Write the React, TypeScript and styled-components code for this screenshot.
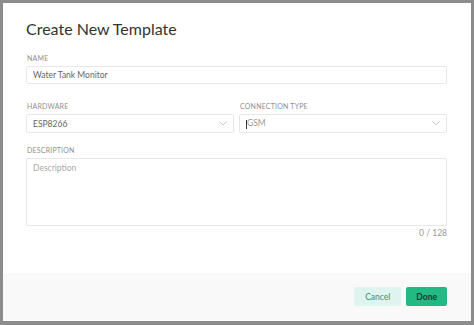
import React from "react";
import styled, { createGlobalStyle } from "styled-components";

const Global = createGlobalStyle`
  html, body { margin: 0; padding: 0; background: #8c8c8c; }
  body { font-family: Lato, "Open Sans", sans-serif; }
  #root { padding: 3px 3px 4px 3px; }
`;

const Modal = styled.div`
  width: 468px;
  height: 318px;
  background: #fff;
  display: flex;
  flex-direction: column;
  box-sizing: border-box;
`;

const Body = styled.div`
  flex: 1;
  padding: 15px 24px 0 23px;
  display: flex;
  flex-direction: column;
`;

const Title = styled.h1`
  margin: 0 0 14px 0;
  font-family: Lato, sans-serif;
  font-weight: 400;
  font-size: 16px;
  line-height: 22px;
  color: #333;
  letter-spacing: 0;
`;

const Row = styled.div`
  display: grid;
  grid-template-columns: 1fr 1fr;
  column-gap: 5px;
`;

const Field = styled.div<{ $mb?: number }>`
  display: flex;
  flex-direction: column;
  margin-bottom: ${(p) => p.$mb ?? 12}px;
`;

const Label = styled.div`
  font-size: 7px;
  line-height: 9px;
  color: #8f8f8f;
  letter-spacing: 0.2px;
  margin-bottom: 3px;
  padding-left: 1px;
`;

const Box = styled.div<{ $h?: number }>`
  height: ${(p) => p.$h ?? 19}px;
  border: 1px solid #e8e8e8;
  border-radius: 2px;
  box-sizing: border-box;
  display: flex;
  align-items: ${(p) => (p.$h && p.$h > 30 ? "flex-start" : "center")};
  padding: ${(p) => (p.$h && p.$h > 30 ? "4px 6px" : "0 6px")};
  font-size: 8.5px;
  color: #666;
`;

const Placeholder = styled.span`
  color: #aaa;
`;

const Value = styled.span<{ $muted?: boolean }>`
  flex: 1;
  color: ${(p) => (p.$muted ? "#999" : "#666")};
`;

const Caret = styled.span`
  display: inline-block;
  width: 1px;
  height: 9px;
  background: #333;
  vertical-align: middle;
`;

const Counter = styled.div`
  text-align: right;
  font-size: 8.5px;
  color: #999;
  margin-top: 2px;
`;

const Footer = styled.div`
  height: 47px;
  background: #f9f9f9;
  margin-bottom: 1px;
  display: flex;
  align-items: center;
  justify-content: flex-end;
  gap: 5px;
  padding-right: 24px;
`;

const Button = styled.button<{ $primary?: boolean }>`
  height: 19px;
  border: none;
  border-radius: 2px;
  padding: 0 ${(p) => (p.$primary ? 10 : 11)}px;
  font-family: Lato, sans-serif;
  font-size: 8.5px;
  font-weight: ${(p) => (p.$primary ? 700 : 500)};
  background: ${(p) => (p.$primary ? "#23b983" : "#dff4ee")};
  color: ${(p) => (p.$primary ? "#163a2c" : "#4a9580")};
  cursor: pointer;
`;

const Chevron = () => (
  <svg width="8" height="5" viewBox="0 0 8 5" fill="none">
    <path d="M0.5 0.5 L4 4 L7.5 0.5" stroke="#c4c4c4" strokeWidth="0.9" />
  </svg>
);

export default function App() {
  return (
    <>
      <Global />
      <Modal>
        <Body>
          <Title>Create New Template</Title>
          <Field $mb={18}>
            <Label>NAME</Label>
            <Box $h={18}>
              <Value>Water Tank Monitor</Value>
            </Box>
          </Field>
          <Row>
            <Field $mb={13}>
              <Label>HARDWARE</Label>
              <Box $h={19}>
                <Value>ESP8266</Value>
                <Chevron />
              </Box>
            </Field>
            <Field $mb={13}>
              <Label>CONNECTION TYPE</Label>
              <Box $h={19}>
                <Value $muted>
                  <Caret />
                  GSM
                </Value>
                <Chevron />
              </Box>
            </Field>
          </Row>
          <Field $mb={0}>
            <Label>DESCRIPTION</Label>
            <Box $h={68}>
              <Placeholder>Description</Placeholder>
            </Box>
            <Counter>0 / 128</Counter>
          </Field>
        </Body>
        <Footer>
          <Button>Cancel</Button>
          <Button $primary>Done</Button>
        </Footer>
      </Modal>
    </>
  );
}
